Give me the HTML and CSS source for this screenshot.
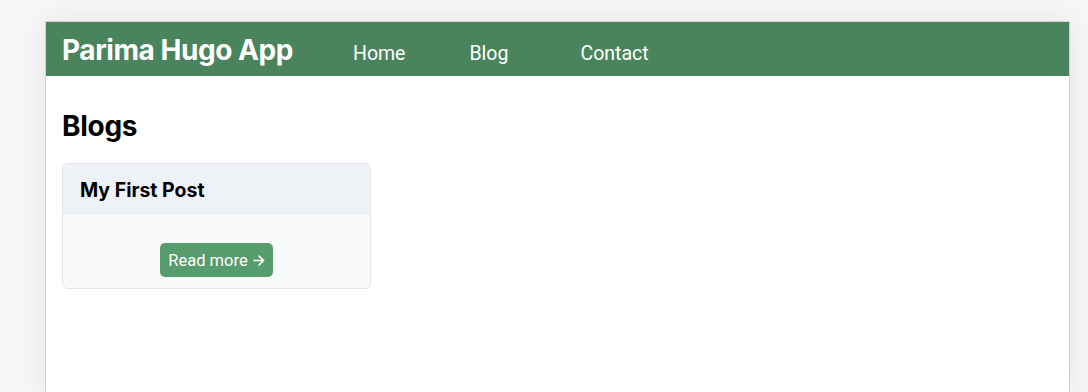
FILE: index.html
```html
<!DOCTYPE html>
<html lang="en">
<head>
<meta charset="utf-8">
<title>Parima Hugo App</title>
<link rel="stylesheet" href="styles.css">
</head>
<body>
<div class="window">
  <header class="topbar">
    <a class="brand" href="#">Parima Hugo App</a>
    <nav class="nav">
      <a class="nav-link nav-home" href="#">Home</a>
      <a class="nav-link nav-blog" href="#">Blog</a>
      <a class="nav-link nav-contact" href="#">Contact</a>
    </nav>
  </header>
  <main class="content">
    <h1 class="page-title">Blogs</h1>
    <div class="card">
      <div class="card-header">My First Post</div>
      <div class="card-body">
        <a class="btn" href="#">Read more<svg class="arrow" width="12" height="11" viewBox="0 0 12 11" aria-hidden="true"><path d="M1 5.5H10.5M6.2 1.2L10.6 5.5L6.2 9.8" fill="none" stroke="#fff" stroke-width="1.7" stroke-linecap="round" stroke-linejoin="round"/></svg></a>
      </div>
    </div>
  </main>
</div>
</body>
</html>
```
FILE: styles.css
```css
html, body {
  margin: 0;
  height: 100%;
}
body {
  background: #f6f6f6;
  padding: 21px 18px 0 45px;
  box-sizing: border-box;
  font-family: Inter, "Liberation Sans", sans-serif;
  overflow: hidden;
}
.window {
  height: 100%;
  background: #fff;
  border: 1px solid #d2d2d2;
  border-bottom: none;
  box-shadow: 0 0 24px rgba(0, 0, 0, 0.07);
  box-sizing: border-box;
}
.topbar {
  height: 54px;
  background: #4a845d;
  display: flex;
  align-items: center;
  padding-left: 16px;
}
.brand {
  color: #fff;
  text-decoration: none;
  font-weight: 700;
  font-size: 28px;
  letter-spacing: -0.45px;
  padding-top: 2px;
}
.nav {
  display: flex;
  align-items: center;
  padding-top: 8px;
}
.nav-link {
  color: #fff;
  text-decoration: none;
  font-size: 19.5px;
  font-family: Roboto, "Liberation Sans", sans-serif;
}
.nav-home { margin-left: 60px; }
.nav-blog { margin-left: 64px; }
.nav-contact { margin-left: 72px; }
.content {
  padding: 0 16px;
}
.page-title {
  margin: 0;
  padding-top: 33px;
  font-size: 28px;
  font-weight: 700;
  letter-spacing: -0.3px;
  color: #000;
  line-height: 34px;
}
.card {
  margin-top: 20px;
  width: 309px;
  border: 1px solid #e2e5ea;
  border-radius: 6px;
  overflow: hidden;
  box-sizing: border-box;
  background: #f8f9fb;
}
.card-header {
  height: 51px;
  background: #eef1f6;
  display: flex;
  align-items: center;
  padding-left: 17px;
  font-size: 19.5px;
  font-weight: 700;
  color: #000;
}
.card-body {
  display: flex;
  justify-content: center;
  padding: 28px 0 11px;
}
.btn {
  background: #579c6c;
  color: #fff;
  text-decoration: none;
  font-family: Roboto, "Liberation Sans", sans-serif;
  font-size: 16.5px;
  height: 34px;
  padding: 0 8px;
  border-radius: 5px;
  display: flex;
  align-items: center;
  gap: 5px;
}
.arrow {
  display: block;
  margin-top: 1px;
}
```
